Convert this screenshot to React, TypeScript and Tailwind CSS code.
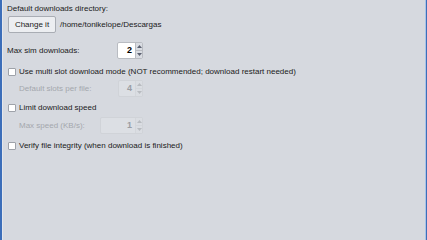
import React from "react";

function Spinner({ value, width, disabled }: { value: string; width: string; disabled?: boolean }) {
  return (
    <div
      className={`flex h-[17px] ${width} border ${disabled ? "border-[#d0d3d8] bg-[#dcdfe4]" : "border-[#b9bcc2] bg-white"} rounded-[2px]`}
    >
      <div className={`flex-1 flex items-center justify-end pr-[3px] text-[9px] font-bold ${disabled ? "text-[#9a9da3]" : "text-black"}`}>
        {value}
      </div>
      <div className={`w-[7px] flex flex-col border-l ${disabled ? "border-[#d3d6db] bg-[#dadde2]" : "border-[#b9bcc2] bg-[#d9dce2]"}`}>
        <div className="flex-1 flex items-center justify-center">
          <svg width="5" height="3" viewBox="0 0 5 3"><path d="M0 3 L2.5 0 L5 3Z" fill={disabled ? "#b8bbc0" : "#5a6070"} /></svg>
        </div>
        <div className={`h-px ${disabled ? "bg-[#d3d6db]" : "bg-[#b9bcc2]"}`} />
        <div className="flex-1 flex items-center justify-center">
          <svg width="5" height="3" viewBox="0 0 5 3"><path d="M0 0 L2.5 3 L5 0Z" fill={disabled ? "#b8bbc0" : "#5a6070"} /></svg>
        </div>
      </div>
    </div>
  );
}

function Check({ label }: { label: string }) {
  return (
    <div className="flex items-center gap-[3px] h-[14px]">
      <div className="w-[8px] h-[8px] bg-white border border-[#9ea2a9] rounded-[1px]" />
      <span>{label}</span>
    </div>
  );
}

export default function App() {
  return (
    <div
      className="w-[427px] h-[240px] bg-[#d6d9df] flex text-[8px] text-[#1a1a1a]"
      style={{ fontFamily: '"Liberation Sans", Arial, sans-serif' }}
    >
      <div className="w-[2px] bg-[#3c6eb9]" />
      <div className="w-px bg-[#e4e7ec]" />
      <div className="flex-1 flex flex-col pl-[4px] pt-[4px]">
        <div className="h-[10px] flex items-center">Default downloads directory:</div>
        <div className="flex items-center gap-[4px] mt-[2px] pl-[1px]">
          <div className="h-[17px] w-[48px] flex items-center justify-center bg-[#eceef1] border border-[#a9adb4] rounded-[2px]">
            Change it
          </div>
          <span>/home/tonikelope/Descargas</span>
        </div>
        <div className="flex items-center mt-[9px] h-[17px]">
          <span className="w-[110px]">Max sim downloads:</span>
          <Spinner value="2" width="w-[26px]" />
        </div>
        <div className="mt-[6px] pl-[1px]">
          <Check label="Use multi slot download mode (NOT recommended; download restart needed)" />
        </div>
        <div className="flex items-center mt-[1px] h-[17px] pl-[12px] text-[#a4a7ad]">
          <span className="w-[99px]">Default slots per file:</span>
          <Spinner value="4" width="w-[25px]" disabled />
        </div>
        <div className="mt-[4px] pl-[1px]">
          <Check label="Limit download speed" />
        </div>
        <div className="flex items-center mt-[2px] h-[17px] pl-[12px] text-[#a4a7ad]">
          <span className="w-[81px]">Max speed (KB/s):</span>
          <Spinner value="1" width="w-[43px]" disabled />
        </div>
        <div className="mt-[5px] pl-[1px]">
          <Check label="Verify file integrity (when download is finished)" />
        </div>
      </div>
      <div className="w-px bg-[#a9c3e6]" />
      <div className="w-px bg-[#3c6eb9]" />
    </div>
  );
}
